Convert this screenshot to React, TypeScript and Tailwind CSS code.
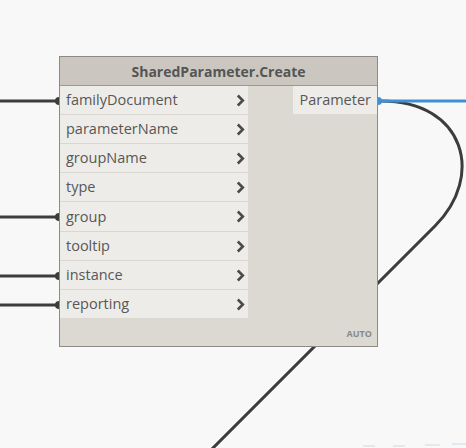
const inputs = [
  { name: "familyDocument", tall: false },
  { name: "parameterName", tall: false },
  { name: "groupName", tall: false },
  { name: "type", tall: false },
  { name: "group", tall: true },
  { name: "tooltip", tall: false },
  { name: "instance", tall: false },
  { name: "reporting", tall: false },
];

function Chevron() {
  return (
    <svg width="9" height="13" viewBox="0 0 9 13" className="shrink-0">
      <path d="M1.8 1.5 L6.8 6.5 L1.8 11.5" fill="none" stroke="#4a4a4a" strokeWidth="2.6" />
    </svg>
  );
}

function Wires() {
  return (
    <svg className="absolute inset-0" width="466" height="448" viewBox="0 0 466 448">
      {/* incoming wires */}
      {[101, 217, 276, 305].map((y) => (
        <g key={y}>
          <line x1="0" y1={y} x2="56" y2={y} stroke="#3c3c3c" strokeWidth="3" />
          <path d={`M59 ${y - 4} A4 4 0 0 0 59 ${y + 4} Z`} fill="#3c3c3c" />
        </g>
      ))}
      {/* outgoing curve, passes behind the node */}
      <path
        d="M381 101 C465 101 485 176 435 226 L190 471"
        fill="none"
        stroke="#3c3c3c"
        strokeWidth="3"
      />
      <line x1="380" y1="101" x2="466" y2="101" stroke="#3f8fd6" strokeWidth="3" />
      <path d="M378 97 A4 4 0 0 1 378 105 Z" fill="#3f8fd6" />
      {/* faint bits of other nodes at the bottom edge */}
      <g stroke="#b9cde0" strokeWidth="1" opacity="0.7">
        <line x1="363" y1="446" x2="375" y2="446" />
        <line x1="393" y1="446" x2="405" y2="446" />
        <line x1="425" y1="445" x2="440" y2="445" />
        <line x1="452" y1="444" x2="466" y2="444" />
      </g>
    </svg>
  );
}

export default function App() {
  return (
    <div
      className="relative h-[448px] w-[466px] overflow-hidden bg-[#f8f8f8]"
      style={{ fontFamily: '"Open Sans", "Noto Sans", sans-serif' }}
    >
      <Wires />
      <div className="relative pl-[59px] pt-[56px]">
        <div className="flex h-[291px] w-[319px] flex-col border border-[#8e8b87] bg-[#dcd9d3]">
          <div className="flex h-[29px] shrink-0 items-center justify-center border-b border-[#9b9892] bg-[#cbc7c0] text-[14px] font-bold text-[#555555]">
            SharedParameter.Create
          </div>
          <div className="flex flex-1">
            <div className="flex w-[188px] flex-col">
              {inputs.map((inp) => (
                <div
                  key={inp.name}
                  className={`flex ${inp.tall ? "h-[30px]" : "h-[29px]"} items-center justify-between border-b border-[#dad7d2] bg-[#eeece8] pl-[6px] pr-[3px] text-[14.5px] text-[#575757]`}
                >
                  <span>{inp.name}</span>
                  <Chevron />
                </div>
              ))}
            </div>
            <div className="flex flex-1 flex-col items-end justify-between pb-[6px] pr-[5px]">
              <div className="-mr-[5px] flex h-[28px] w-[84px] items-center justify-end bg-[#eeece8] pr-[6px] text-[14.5px] text-[#575757]">
                Parameter
              </div>
              <span className="text-[9px] font-bold text-[#8a8a8a]">AUTO</span>
            </div>
          </div>
        </div>
      </div>
    </div>
  );
}
